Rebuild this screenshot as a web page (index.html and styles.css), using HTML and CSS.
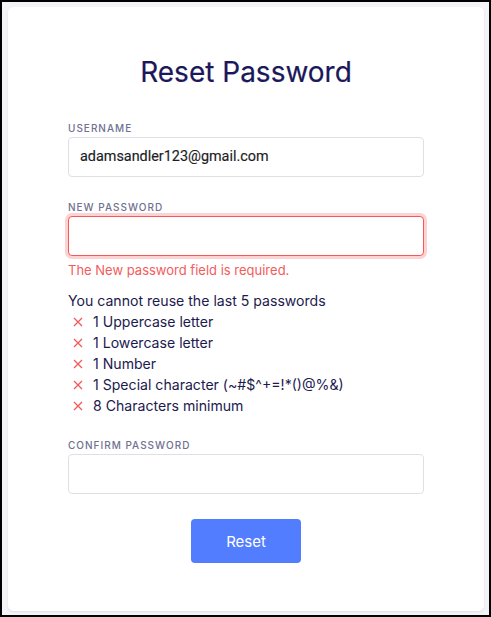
FILE: index.html
```html
<!DOCTYPE html>
<html>
<head>
<meta charset="utf-8">
<link rel="stylesheet" href="styles.css">
</head>
<body>
<div class="frame">
  <div class="card">
    <h1 class="title">Reset Password</h1>
    <form class="form">
      <div class="field">
        <label class="label">Username</label>
        <div class="input input-filled">adamsandler123@gmail.com</div>
      </div>
      <div class="field field-new">
        <label class="label">New Password</label>
        <div class="input input-error"></div>
        <div class="error">The New password field is required.</div>
      </div>
      <div class="rules">
        <div class="rules-head">You cannot reuse the last 5 passwords</div>
        <ul class="rule-list">
          <li class="rule"><svg class="x" viewBox="0 0 10 10" width="10" height="10"><path d="M1 1L9 9M9 1L1 9"/></svg>1 Uppercase letter</li>
          <li class="rule"><svg class="x" viewBox="0 0 10 10" width="10" height="10"><path d="M1 1L9 9M9 1L1 9"/></svg>1 Lowercase letter</li>
          <li class="rule"><svg class="x" viewBox="0 0 10 10" width="10" height="10"><path d="M1 1L9 9M9 1L1 9"/></svg>1 Number</li>
          <li class="rule"><svg class="x" viewBox="0 0 10 10" width="10" height="10"><path d="M1 1L9 9M9 1L1 9"/></svg>1 Special character (~#$^+=!*()@%&amp;)</li>
          <li class="rule"><svg class="x" viewBox="0 0 10 10" width="10" height="10"><path d="M1 1L9 9M9 1L1 9"/></svg>8 Characters minimum</li>
        </ul>
      </div>
      <div class="field field-confirm">
        <label class="label">Confirm Password</label>
        <div class="input"></div>
      </div>
      <div class="actions">
        <button type="button" class="btn">Reset</button>
      </div>
    </form>
  </div>
</div>
</body>
</html>
```

FILE: styles.css
```css
* { box-sizing: border-box; }
html, body { margin: 0; padding: 0; }
body {
  font-family: Inter, "Noto Sans", sans-serif;
  background: #000;
}
.frame {
  width: 491px;
  height: 617px;
  border: 2px solid #000;
  background: #f4f4f8;
  padding: 5px 5px 2px 6px;
}
.card {
  height: 604px;
  background: #fff;
  border-radius: 5px;
  box-shadow: 0 1px 2px rgba(40, 40, 80, 0.12);
  padding: 0 60px 0 60px;
}
.title {
  margin: 0;
  padding-top: 47px;
  text-align: center;
  font-size: 28px;
  font-weight: 400;
  color: #1a185a;
  line-height: 36px;
  -webkit-text-stroke: 0.2px #1a185a;
}
.form { margin-top: 32px; }
.field { display: flex; flex-direction: column; }
.label {
  font-size: 10px;
  letter-spacing: 1px;
  text-transform: uppercase;
  color: #6e7191;
  font-weight: 500;
  line-height: 12px;
  margin-bottom: 3px;
}
.input {
  height: 40px;
  border: 1px solid #dfe0e6;
  border-radius: 4px;
  background: #fff;
}
.input-filled {
  padding-left: 11px;
  font-family: Roboto, sans-serif;
  font-size: 14.4px;
  line-height: 37px;
  color: #1c1c24;
  -webkit-text-stroke: 0.15px #1c1c24;
}
.input-error {
  border-color: #f25a5a;
  box-shadow: 0 0 0 3px #fdd2d2;
}
.field-new { margin-top: 24px; }
.error {
  margin-top: 6px;
  font-size: 13px;
  color: #f45b5b;
  line-height: 16px;
}
.rules { margin-top: 12px; color: #1c1a4e; font-size: 14.1px; }
.rules-head { line-height: 21px; }
.rule-list { list-style: none; margin: 0; padding: 0; }
.rule { line-height: 21px; display: flex; align-items: center; }
.x {
  fill: none;
  stroke: #f05a5a;
  stroke-width: 1.3;
  margin-left: 5px;
  margin-right: 10px;
  flex-shrink: 0;
}
.field-confirm { margin-top: 23px; }
.actions { display: flex; justify-content: center; margin-top: 25px; }
.btn {
  width: 110px;
  height: 44px;
  border: none;
  border-radius: 4px;
  background: #527dff;
  color: #fff;
  font-family: Inter, sans-serif;
  font-size: 15px;
}
```
